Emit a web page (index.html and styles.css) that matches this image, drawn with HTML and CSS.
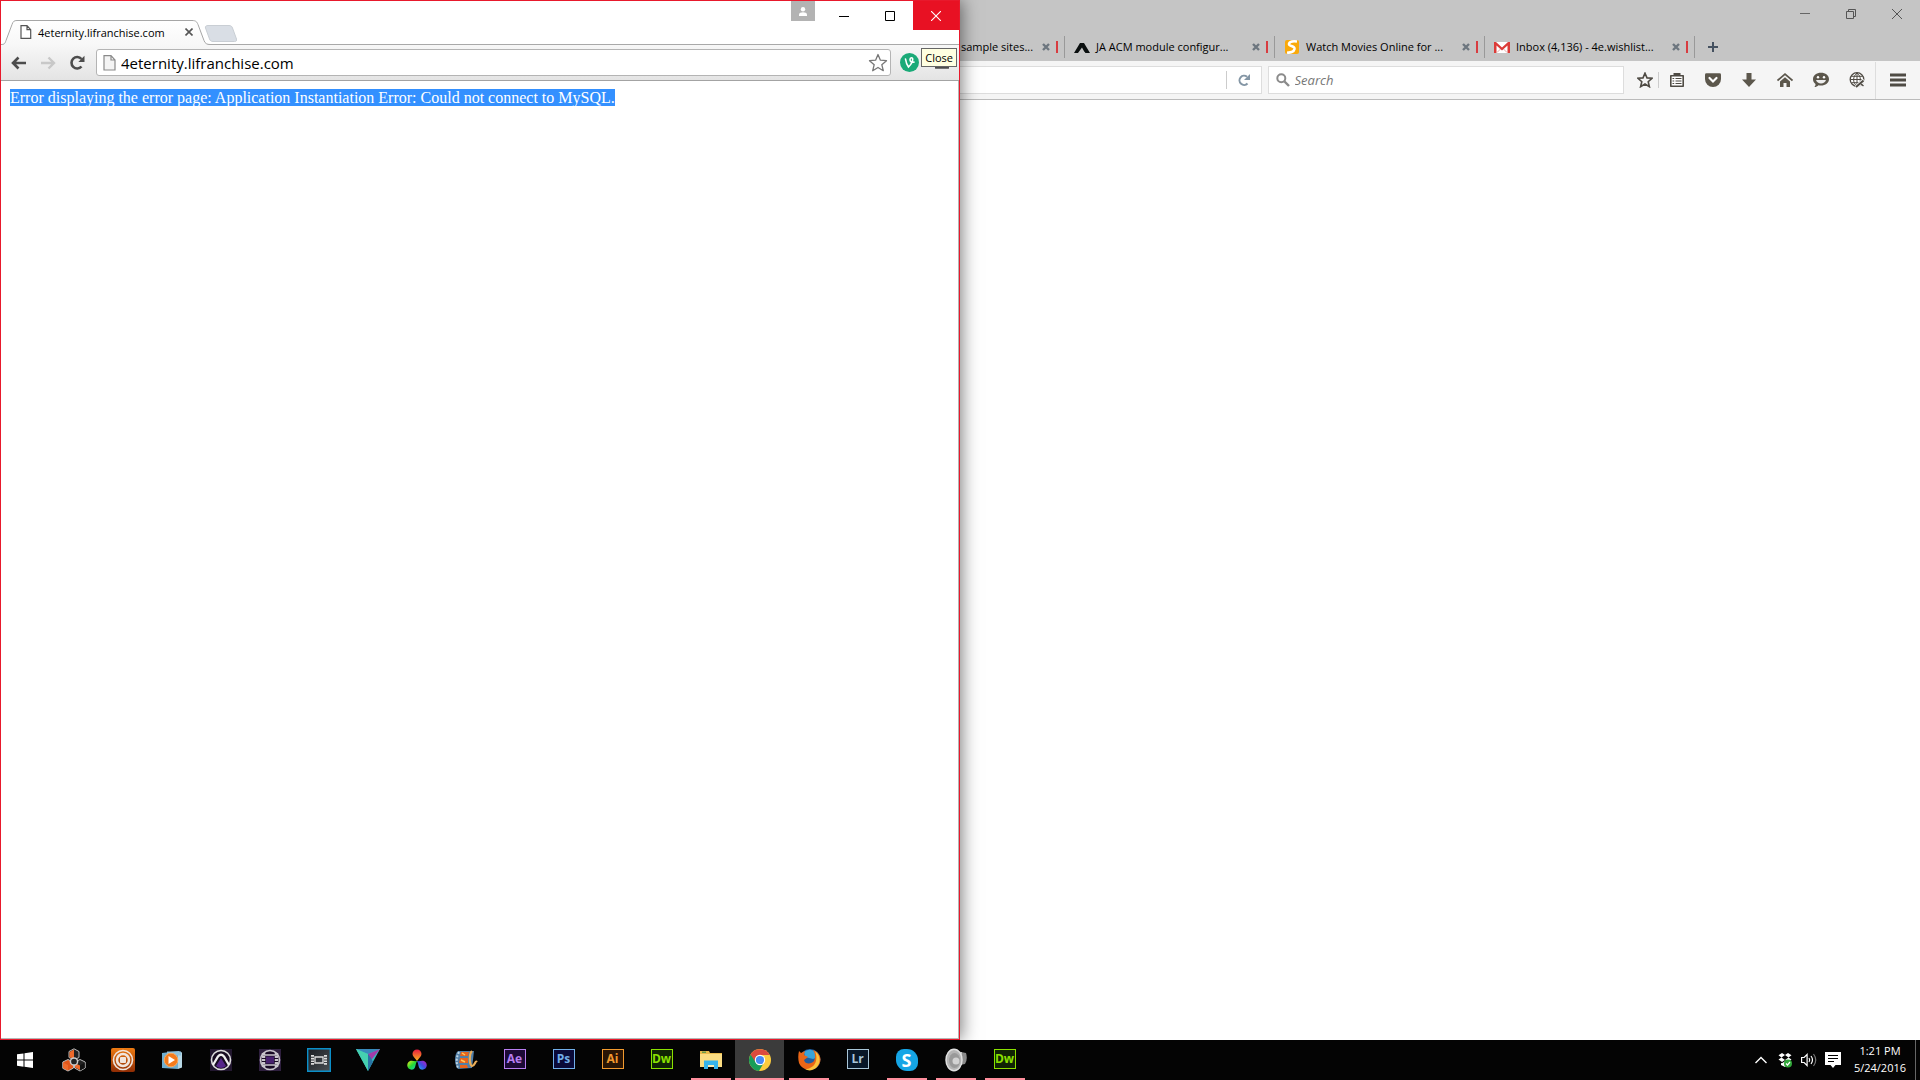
FILE: index.html
```html
<!DOCTYPE html>
<html lang="en">
<head>
    <meta charset="utf-8">
    <title>Desktop</title>
    <link rel="stylesheet" href="styles.css">
</head>
<body>
    <div class="windows">
        <!-- Chrome -->
        <section class="chrome">
            <header class="chrome-titlebar">
                <div class="chrome-tab">
                    <svg class="chrome-tab-shape" width="212" height="26" viewBox="0 0 212 26">
                        <defs>
                            <linearGradient id="tabFill" x1="0" y1="0" x2="0" y2="1"><stop offset="0" stop-color="#fff"/><stop offset="1" stop-color="#f7f7f7"/></linearGradient>
                        </defs>
                        <path d="M0 24.500C4 24.500 4 23 5 20.500L11 4.500C12 1.500 13 .500 16 .500H191C195 .500 196 2 197 4.500L203 20.500C204 23.500 206 24.500 209 24.500V26H0z" fill="url(#tabFill)"/>
                        <path d="M0 24.500C4 24.500 4 23 5 20.500L11 4.500C12 1.500 13 .500 16 .500H191C195 .500 196 2 197 4.500L203 20.500C204 23.500 206 24.500 209 24.500" fill="none" stroke="#a6a6a6"/>
                    </svg>
                    <svg class="chrome-page-icon" width="12" height="14" viewBox="0 0 12 14"><path d="M1 .700h6l3.700 4v8.600H1zM7 .700v4h3.700" fill="#fff" stroke="#555" stroke-width="1.200"/></svg>
                    <a class="chrome-tab-title" href="#">4eternity.lifranchise.com</a>
                    <button class="plain" aria-label="Close tab"><svg width="8" height="8" viewBox="0 0 8 8"><path d="M.500.500l7 7M7.500.500l-7 7" stroke="#555" stroke-width="1.600"/></svg></button>
                </div>
                <button class="plain new-tab" aria-label="New tab"><svg width="33" height="17" viewBox="0 0 33 17"><path d="M4 .500h21c2 0 3 1 3.500 2.500l4 11c.500 1.500 0 2.500-2 2.500H9c-2 0-3-1-3.500-2.500l-4-11C1 1.500 2 .500 4 .500z" fill="#d9dee5" stroke="#c9ced4"/></svg></button>
                <div class="chrome-controls">
                    <button class="plain profile" aria-label="Profile"><svg width="10" height="9" viewBox="0 0 10 9"><circle cx="5" cy="2.200" r="2.200" fill="#fff"/><path d="M1 9V7.500C1 6 3 5.300 5 5.300s4 .700 4 2.200V9z" fill="#fff"/></svg></button>
                    <button class="plain control" aria-label="Minimize"><svg width="10" height="10" viewBox="0 0 10 10"><path d="M0 5.500h10" stroke="#000"/></svg></button>
                    <button class="plain control" aria-label="Maximize"><svg width="10" height="10" viewBox="0 0 10 10"><path d="M.500.500h9v9h-9z" fill="none" stroke="#000"/></svg></button>
                    <button class="plain control control-close" aria-label="Close"><svg width="10" height="10" viewBox="0 0 10 10"><path d="M0 0l10 10M10 0L0 10" stroke="#fff" stroke-width="1.100"/></svg></button>
                </div>
            </header>
            <div class="chrome-toolbar">
                <button class="plain" aria-label="Back"><svg width="16" height="14" viewBox="0 0 16 14"><path d="M15 7H3M7.500 1.500L2 7l5.500 5.500" fill="none" stroke="#4d4d4d" stroke-width="2.600"/></svg></button>
                <button class="plain" aria-label="Forward"><svg width="16" height="14" viewBox="0 0 16 14"><path d="M1 7h12M8.500 1.500L14 7l-5.500 5.500" fill="none" stroke="#c8c8c8" stroke-width="2.400"/></svg></button>
                <button class="plain" aria-label="Reload"><svg width="16" height="16" viewBox="0 0 16 16"><path d="M12.500 11.500A5.700 5.700 0 1 1 12.500 4" fill="none" stroke="#4d4d4d" stroke-width="2.600"/><path d="M15.500.800V7H9.300z" fill="#4d4d4d"/></svg></button>
                <div class="omnibox">
                    <svg class="chrome-page-icon" width="13" height="16" viewBox="0 0 13 16"><path d="M1 .700h7l4 4.300v10H1zM8 .700V5h4" fill="#f4f4f4" stroke="#8a8a8a" stroke-width="1.200"/></svg>
                    <input class="omnibox-input" type="text" aria-label="Address" value="4eternity.lifranchise.com">
                    <button class="plain" aria-label="Bookmark"><svg width="20" height="19" viewBox="0 0 20 19"><path d="M10 1.500l2.400 5.700 6.100.500-4.700 4 1.500 6L10 14.500l-5.300 3.200 1.500-6-4.700-4 6.100-.500z" fill="#fff" stroke="#777" stroke-width="1.300" stroke-linejoin="round"/></svg></button>
                </div>
                <button class="plain" aria-label="Vine"><svg width="19" height="19" viewBox="0 0 19 19"><circle cx="9.500" cy="9.500" r="9.500" fill="#1aaa78"/><path d="M5.500 6c.500 3.500 1.500 6 3 8 2-2 4-4.500 4.200-7.500 0-2.500-2.700-2.300-2.700 0 0 2.300 1.500 3.300 4 2.600" fill="none" stroke="#fff" stroke-width="1.600" stroke-linecap="round"/></svg></button>
                <button class="plain chrome-menu" aria-label="Menu"><svg width="14" height="13" viewBox="0 0 14 13"><path d="M1 1.500h12M1 6.500h12M1 11.500h12" stroke="#4d4d4d" stroke-width="2.600" stroke-linecap="round"/></svg></button>
                <div class="tooltip" role="tooltip">Close</div>
            </div>
            <main class="chrome-page"><span class="selected">Error displaying the error page: Application Instantiation Error: Could not connect to MySQL.</span></main>
        </section>

        <!-- Firefox -->
        <section class="firefox">
            <header class="firefox-titlebar">
                <button class="plain" aria-label="Minimize"><svg width="10" height="10" viewBox="0 0 10 10"><path d="M0 4.500h10" stroke="#666"/></svg></button>
                <button class="plain" aria-label="Restore"><svg width="10" height="10" viewBox="0 0 10 10"><path d="M.500 2.500h7v7h-7zM2.500 2.500v-2h7v7h-2" fill="none" stroke="#555"/></svg></button>
                <button class="plain" aria-label="Close"><svg width="10" height="10" viewBox="0 0 10 10"><path d="M0 0l10 10M10 0L0 10" stroke="#555"/></svg></button>
            </header>
            <nav class="firefox-tabs">
                <div class="firefox-tab firefox-tab-cut">
                    <a class="firefox-tab-title" href="#">sample sites...</a>
                    <button class="plain" aria-label="Close tab"><svg width="8" height="8" viewBox="0 0 8 8"><path d="M1 1l6 6M7 1L1 7" stroke="#6d767f" stroke-width="2.400"/></svg></button>
                    <span class="tab-mark"></span>
                </div>
                <div class="firefox-tab">
                    <svg width="16" height="16" viewBox="0 0 16 16"><path d="M0 14L6 4h4l6 10h-5L8 8.500 4 14z" fill="#0a0f0f"/><path d="M4.500 14L8 10.800l3.500 3.200z" fill="#c5c5c5"/></svg>
                    <a class="firefox-tab-title" href="#">JA ACM module configur...</a>
                    <button class="plain" aria-label="Close tab"><svg width="8" height="8" viewBox="0 0 8 8"><path d="M1 1l6 6M7 1L1 7" stroke="#6d767f" stroke-width="2.400"/></svg></button>
                    <span class="tab-mark"></span>
                </div>
                <div class="firefox-tab">
                    <svg width="16" height="16" viewBox="0 0 16 16"><rect x="1" y="1" width="14" height="14" rx="2" fill="#f9a90a"/><path d="M13 2.500C9 2 5.500 2.500 5 5c-.400 2.500 6 1.500 5.500 5C10 13 6 14 3 13.500" fill="none" stroke="#fff" stroke-width="2.600"/></svg>
                    <a class="firefox-tab-title" href="#">Watch Movies Online for ...</a>
                    <button class="plain" aria-label="Close tab"><svg width="8" height="8" viewBox="0 0 8 8"><path d="M1 1l6 6M7 1L1 7" stroke="#6d767f" stroke-width="2.400"/></svg></button>
                    <span class="tab-mark"></span>
                </div>
                <div class="firefox-tab">
                    <svg width="16" height="16" viewBox="0 0 16 16"><path d="M0 3h16v11H0z" fill="#fff"/><path d="M0 14V3h2l6 5.500L14 3h2v11h-2.500V6.500L8 11.500 2.500 6.500V14z" fill="#dc3c39"/><path d="M3 13.500L6.500 10M13 13.500L9.500 10" stroke="#e5a9a6"/></svg>
                    <a class="firefox-tab-title" href="#">Inbox (4,136) - 4e.wishlist...</a>
                    <button class="plain" aria-label="Close tab"><svg width="8" height="8" viewBox="0 0 8 8"><path d="M1 1l6 6M7 1L1 7" stroke="#6d767f" stroke-width="2.400"/></svg></button>
                    <span class="tab-mark"></span>
                </div>
                <button class="plain firefox-new-tab" aria-label="New tab"><svg width="10" height="10" viewBox="0 0 10 10"><path d="M5 0v10M0 5h10" stroke="#455160" stroke-width="2"/></svg></button>
            </nav>
            <div class="firefox-toolbar">
                <div class="firefox-url">
                    <input type="text" aria-label="Firefox address">
                    <button class="plain" aria-label="Reload"><svg width="12" height="12" viewBox="0 0 12 12"><path d="M9.500 9.500A4.600 4.600 0 1 1 9 2.800" fill="none" stroke="#8496a5" stroke-width="2"/><path d="M12 0v6H6z" fill="#8496a5"/></svg></button>
                </div>
                <div class="firefox-search">
                    <svg width="14" height="14" viewBox="0 0 14 14"><circle cx="5.300" cy="5.300" r="4" fill="none" stroke="#8b8b8b" stroke-width="2"/><path d="M8.500 8.500l4.500 4.500" stroke="#8b8b8b" stroke-width="2.400"/></svg>
                    <input type="text" aria-label="Search" placeholder="Search">
                </div>
                <div class="firefox-tools">
                    <button class="plain tool-star" aria-label="Bookmark"><svg width="16" height="16" viewBox="0 0 16 16"><path d="M8 1.200l2 4.700 5 .400-3.800 3.400 1.200 5L8 12l-4.400 2.700 1.200-5L1 6.300l5-.400z" fill="none" stroke="#4f4b44" stroke-width="1.600"/></svg></button>
                    <button class="plain" aria-label="Bookmarks list"><svg width="16" height="16" viewBox="0 0 16 16"><path d="M1.800 3.800h12.400v10.400H1.800z" fill="#fff" stroke="#4f4b44" stroke-width="1.600" stroke-linejoin="round"/><path d="M4.500 3.500V1h7v2.500z" fill="#4f4b44"/><path d="M3.500 6.500h1.700M3.500 9h1.700M3.500 11.500h1.700M6.500 6.500h6M6.500 9h6M6.500 11.500h6" stroke="#4f4b44" stroke-width="1.100"/></svg></button>
                    <button class="plain" aria-label="Pocket"><svg width="16" height="16" viewBox="0 0 16 16"><path d="M0 2.500Q0 1.200 1.500 1.200h13Q16 1.200 16 2.500V7A8 8 0 0 1 0 7z" fill="#5c574c"/><path d="M4.500 6L8 9.500 11.500 6" fill="none" stroke="#fff" stroke-width="2.200" stroke-linecap="round"/></svg></button>
                    <button class="plain" aria-label="Downloads"><svg width="16" height="16" viewBox="0 0 16 16"><path d="M5.500 1h5v6.500H15L8 15 1 7.500h4.500z" fill="#5c574c"/></svg></button>
                    <button class="plain" aria-label="Home"><svg width="16" height="16" viewBox="0 0 16 16"><path d="M.500 8.500L8 2l7.500 6.500" fill="none" stroke="#5c574c" stroke-width="1.700"/><path d="M3 9.500l5-4.300 5 4.300V15H9.500v-4h-3v4H3z" fill="#5c574c"/></svg></button>
                    <button class="plain" aria-label="Chat"><svg width="16" height="16" viewBox="0 0 16 16"><path d="M8 .800c4.500 0 8 2.700 8 6.400s-3.500 6.300-8 6.300c-1 0-1.700 0-2.500-.300-1 1.200-2.400 1.800-4.200 1.900.800-.900 1.300-1.800 1.200-3.100C1 10.900 0 9.200 0 7.200 0 3.500 3.500.800 8 .800z" fill="#5c574c"/><circle cx="5" cy="5.200" r="1.200" fill="#fff"/><circle cx="11" cy="5.200" r="1.200" fill="#fff"/><path d="M3 8h10c-.700 2.200-2.600 3.400-5 3.400S3.700 10.200 3 8z" fill="#eee"/></svg></button>
                    <button class="plain" aria-label="Developer"><svg width="16" height="16" viewBox="0 0 16 16"><circle cx="8" cy="7.500" r="6.800" fill="#fff" stroke="#4f4b44" stroke-width="1.300"/><path d="M8 1v13M1.500 7.500h13M2.500 4.300h11M2.500 10.700h8M8 1C3.500 4.500 3.500 11 8 14M8 1c4.500 3.500 4.500 9.500 0 13" fill="none" stroke="#4f4b44"/><path d="M7 15.500L15 8" stroke="#f5f5f5" stroke-width="4"/><path d="M7 15l7.500-6.500" stroke="#4f4b44" stroke-width="2"/><path d="M12 12l2.500 2" stroke="#4f4b44" stroke-width="1.500"/></svg></button>
                    <button class="plain tool-menu" aria-label="Open menu"><svg width="16" height="14" viewBox="0 0 16 14"><path d="M0 2h16M0 7h16M0 12h16" stroke="#4f4b44" stroke-width="2.800"/></svg></button>
                </div>
            </div>
            <div class="firefox-page"></div>
        </section>
    </div>

    <footer class="taskbar">
        <div class="taskbar-apps">
            <button class="plain app" aria-label="Start"><svg width="16" height="16" viewBox="0 0 16 16"><path d="M0 2.300L6.500 1.400v6.200H0zM7.500 1.200L16 0v7.600H7.500zM0 8.500h6.500v6.200L0 13.800zM7.500 8.500H16V16l-8.500-1.200z" fill="#fff"/></svg></button>
            <button class="plain app" aria-label="Reason"><svg width="24" height="24" viewBox="0 0 24 24"><g stroke="#bbb"><path d="M12 .800l5 2.700v6L12 12 7 9.500v-6z" fill="#222"/><path d="M6 11.500l5.500 2.800v5.700L6 23 .800 20.300V14z" fill="#e2561a"/><path d="M18 11.500l5.200 2.500v6L18 23l-5.500-3v-5.700z" fill="#222"/></g><path d="M7.500 4l4.500-2.500V11L7.500 9.200zM13 15l5 2.500V22l-5-2.500zM1 14.500L6 17v5.500L1 20z" fill="#ee6a2b"/><path d="M18 17.500l4.700-3v5.500L18 22.500z" fill="#111"/><circle cx="12" cy="13.500" r="3.600" fill="#222" stroke="#ccc" stroke-width="1.500"/></svg></button>
            <button class="plain app" aria-label="Recorder"><svg width="24" height="24" viewBox="0 0 24 24"><defs><linearGradient id="orange" x1="0" y1="0" x2="0" y2="1"><stop offset="0" stop-color="#ee7b12"/><stop offset="1" stop-color="#8f2c04"/></linearGradient></defs><rect width="24" height="24" rx="2" fill="url(#orange)"/><circle cx="12" cy="12" r="9.500" fill="none" stroke="#f0e5de" stroke-width="1.600"/><circle cx="12" cy="12" r="6" fill="none" stroke="#f0e5de" stroke-width="2.500"/><rect x="9" y="9" width="6" height="6" rx="1" fill="#f0e5de"/></svg></button>
            <button class="plain app" aria-label="Media Player"><svg width="22" height="22" viewBox="0 0 22 22"><path d="M1 4l16-2v18L1 19z" fill="#70afd0"/><path d="M17 2l4 1.500v15L17 20z" fill="#b7d8e6"/><path d="M6 2.500h14v4H6z" fill="#8fc2dc"/><circle cx="10" cy="11" r="6.800" fill="#f47b1c" stroke="#fba95b"/><path d="M7.500 7v8l6.500-4z" fill="#fff"/></svg></button>
            <button class="plain app" aria-label="Pro Tools"><svg width="24" height="24" viewBox="0 0 24 24"><rect x="1" y="1" width="22" height="22" fill="#22172f"/><circle cx="12" cy="12" r="9.500" fill="#160b20" stroke="#ddd" stroke-width="1.600"/><path d="M4 17L9 8.500q3-3.500 6 0L20 17" fill="none" stroke="#eee" stroke-width="2.300"/><path d="M7 18l5-8 5 8q-5 4-10 0z" fill="#552589"/></svg></button>
            <button class="plain app" aria-label="Media Composer"><svg width="24" height="24" viewBox="0 0 24 24"><rect x="1" y="1" width="22" height="22" fill="#2f203f"/><circle cx="12" cy="12" r="9.500" fill="#180a24" stroke="#c9c5cc" stroke-width="1.600"/><path d="M4 7h16M4 17h16" stroke="#c9c5cc" stroke-width="1.500"/><path d="M5.500 5v14M18.500 5v14" stroke="#c9c5cc" stroke-width="3.500" stroke-dasharray="2 1"/><path d="M8 8.500h8v7H8z" fill="#47206e"/></svg></button>
            <button class="plain app" aria-label="Movie Studio"><svg width="24" height="24" viewBox="0 0 24 24"><defs><linearGradient id="steel" x1="0" y1="0" x2="1" y2="1"><stop offset="0" stop-color="#1a1d22"/><stop offset="1" stop-color="#4b5054"/></linearGradient></defs><path d="M.700.700h22.600v22.600H.700z" fill="url(#steel)" stroke="#0b8fc9" stroke-width="1.400"/><path d="M5.500 7v10M18.500 7v10" stroke="#ddd" stroke-width="3" stroke-dasharray="1.700 1"/><path d="M8 9h8v6H8z" fill="none" stroke="#ddd" stroke-width="1.300"/></svg></button>
            <button class="plain app" aria-label="Vegas"><svg width="24" height="22" viewBox="0 0 24 22"><path d="M0 0h24L12 22z" fill="#36b9bd"/><path d="M0 0h24l-12 5z" fill="#3889bb"/><path d="M0 0l12 5v17z" fill="#45d0b0"/><path d="M24 0L12 5v10z" fill="#a33caa"/><path d="M12 5v17l5-9-2-4z" fill="#2875a5"/></svg></button>
            <button class="plain app" aria-label="DaVinci Resolve"><svg width="24" height="24" viewBox="0 0 24 24"><defs><linearGradient id="red" x1="0" y1="0" x2="0" y2="1"><stop offset="0" stop-color="#e91b40"/><stop offset="1" stop-color="#f8b81c"/></linearGradient><linearGradient id="green" x1="0" y1="0" x2="1" y2="1"><stop offset="0" stop-color="#f4ed1c"/><stop offset=".5" stop-color="#25d835"/><stop offset="1" stop-color="#18cbd1"/></linearGradient><linearGradient id="blue" x1="0" y1="1" x2="1" y2="0"><stop offset="0" stop-color="#24bfeb"/><stop offset=".5" stop-color="#3d4de5"/><stop offset="1" stop-color="#c01bbd"/></linearGradient></defs><path d="M12 13C10 10 7.500 8.500 7.500 6a4.500 4.500 0 0 1 9 0C16.500 8.500 14 10 12 13z" fill="url(#red)"/><path d="M12 13c-2 3.500-1 6.500-3.500 8.300a4.500 4.500 0 1 1-3.500-8.300c2.500-.700 4 .500 7 0z" fill="url(#green)"/><path d="M12 13c2 3.500 1 6.500 3.500 8.300a4.500 4.500 0 1 0 3.500-8.300c-2.500-.700-4 .500-7 0z" fill="url(#blue)"/></svg></button>
            <button class="plain app" aria-label="Video Editor"><svg width="24" height="22" viewBox="0 0 24 22"><path d="M4 2h16L18 19l-14 1C0 16 0 5 4 2z" fill="#527fa8"/><path d="M5 3Q1 11 4 19" fill="none" stroke="#bed5e1" stroke-width="2" stroke-dasharray="2 1.500"/><path d="M7 3h8l-1 4H6zM6 9h8v5H5zM6 16h7l1 3H6z" fill="#e8641c"/><path d="M8 4l3 2M7 11l4 2" stroke="#ffc75b" stroke-width="1.500"/><path d="M18 2c-3 3-3 13 0 15 3 .500 3-6 5-4" fill="none" stroke="#e9ad58" stroke-width="2.200"/></svg></button>
            <button class="plain app" aria-label="After Effects"><span class="adobe adobe-ae">Ae</span></button>
            <button class="plain app" aria-label="Photoshop"><span class="adobe adobe-ps">Ps</span></button>
            <button class="plain app" aria-label="Illustrator"><span class="adobe adobe-ai">Ai</span></button>
            <button class="plain app" aria-label="Dreamweaver"><span class="adobe adobe-dw">Dw</span></button>
            <button class="plain app running" aria-label="File Explorer"><svg width="22" height="20" viewBox="0 0 22 20"><path d="M0 1h9l1 2h12v14H0z" fill="#e9b94c"/><path d="M0 4h22v13H0z" fill="#fbdc82"/><path d="M2 1.500h4v1.500H2z" fill="#6a9b48"/><path d="M4 10.500h14V19h-4v-4H8v4H4z" fill="#36b3ec"/><path d="M8 15h6v2H8z" fill="#fceab1"/></svg></button>
            <button class="plain app running active" aria-label="Chrome"><svg width="22" height="22" viewBox="0 0 22 22"><circle cx="11" cy="11" r="11" fill="#fccb3d"/><path d="M11 11L1.500 5.500A11 11 0 0 0 10 22l5-8.500z" fill="#189d59"/><path d="M1.500 5.500A11 11 0 0 1 20.600 6H11a5 5 0 0 0-4.500 7z" fill="#dc4a3d"/><circle cx="11" cy="11" r="5.200" fill="#fff"/><circle cx="11" cy="11" r="4.100" fill="#4789f4"/></svg></button>
            <button class="plain app running" aria-label="Firefox"><svg width="24" height="24" viewBox="0 0 24 24"><circle cx="13" cy="11.500" r="10.500" fill="#1f5c9f"/><path d="M7 4q7-5 12 1 2 5-3 6L8 9z" fill="#39a3d8"/><path d="M2 3l2 2 4-2-1 4 4 2-4 3c1 5 8 4 10 1 2-4 1-8-1-11 8 3 10 11 4 17-6 5-15 3-18-4C1 11 1 7 2 3z" fill="#e96616"/><path d="M18 3c6 5 6 12 1 17-4 3-8 3-11 1 9 0 14-8 10-18z" fill="#fbc33b"/></svg></button>
            <button class="plain app" aria-label="Lightroom"><span class="adobe adobe-lr">Lr</span></button>
            <button class="plain app running" aria-label="Skype"><span class="skype">S</span></button>
            <button class="plain app running" aria-label="Sound"><svg width="22" height="24" viewBox="0 0 22 24"><path d="M9 1l7 3 5 1q2 6-1 11l-5 1-6 5z" fill="#8b8b8b"/><path d="M16 4v13" stroke="#c5c5c5" stroke-width="2"/><ellipse cx="9" cy="12" rx="8" ry="10.800" fill="#b4b4b4" stroke="#e0e0e0" stroke-width="1.500"/><ellipse cx="9.500" cy="12.500" rx="5.500" ry="7.500" fill="#999"/><circle cx="11" cy="13" r="3.500" fill="#d2d2d2"/></svg></button>
            <button class="plain app running" aria-label="Dreamweaver site"><span class="adobe adobe-dw">Dw</span></button>
        </div>
        <div class="tray">
            <button class="plain tray-icon" aria-label="Show hidden icons"><svg width="12" height="8" viewBox="0 0 12 8"><path d="M.500 7L6 1.500 11.500 7" fill="none" stroke="#fff" stroke-width="1.400"/></svg></button>
            <button class="plain tray-icon" aria-label="Dropbox"><svg width="14" height="15" viewBox="0 0 14 15"><path d="M4 0l3 2-3.500 2.500L.500 2.200zM10 0l3.500 2.200-3 2.300L7 2zM.500 6.500l3-2L7 7 4 9zM10.500 4.500l3 2L10 9 7 7zM3 10l1 .300 3-2 3 2V12l-3 2-4-2z" fill="#fff"/><circle cx="10" cy="10.500" r="4" fill="#32a83a"/><path d="M8 10.500l1.500 1.500L12 9" fill="none" stroke="#fff" stroke-width="1.200"/></svg></button>
            <button class="plain tray-icon" aria-label="Volume"><svg width="16" height="14" viewBox="0 0 16 14"><path d="M.600 4.500h2.500l3-3v11l-3-3H.600z" fill="none" stroke="#fff" stroke-width="1.200"/><path d="M8 5q1.500 2 0 4M10 3q3 4 0 8" fill="none" stroke="#fff" stroke-width="1.200"/><path d="M12.500 1q4.500 6 0 12" fill="none" stroke="#777" stroke-width="1.200"/></svg></button>
            <button class="plain tray-icon" aria-label="Notifications"><svg width="16" height="16" viewBox="0 0 16 16"><path d="M0 0h16v13H10.500L8 16l-2.500-3H0z" fill="#fff"/><path d="M3 3.500h10M3 6.500h10M3 9.500h6" stroke="#000" stroke-width="1.200"/></svg></button>
            <div class="clock">
                <div>1:21 PM</div>
                <div>5/24/2016</div>
            </div>
            <button class="plain show-desktop" aria-label="Show desktop"></button>
        </div>
    </footer>
</body>
</html>
```

FILE: styles.css
```css
* {
    box-sizing: border-box;
}
body {
    margin: 0;
    min-height: 100vh;
    display: flex;
    flex-direction: column;
    font-family: "Open Sans", "Noto Sans", sans-serif;
    font-size: 11px;
    color: #000;
    background-color: #fff;
}
a {
    color: inherit;
    text-decoration: none;
}
svg {
    display: block;
    flex: none;
}
input {
    min-width: 0;
    flex: 1;
    padding: 0;
    border: none;
    outline: none;
    background: none;
    font-family: inherit;
    color: #000;
}
.plain {
    display: flex;
    align-items: center;
    justify-content: center;
    flex: none;
    padding: 0;
    border: none;
    background: none;
    font-family: inherit;
}
.windows {
    flex: 1;
    display: grid;
    grid-template-columns: 1fr 1fr;
}

/* Chrome window */
.chrome {
    position: relative;
    z-index: 1;
    display: flex;
    flex-direction: column;
    border: 1px solid #e8192c;
    background-color: #fff;
    box-shadow: 2px 0 16px rgba(0, 0, 0, 0.5);
}
.chrome-titlebar {
    display: flex;
    align-items: flex-end;
    height: 43px;
}
.chrome-tab {
    position: relative;
    z-index: 1;
    display: flex;
    align-items: center;
    width: 203px;
    height: 24px;
    padding: 0 11px 0 19px;
}
.chrome-tab-shape {
    position: absolute;
    left: 0;
    top: 0;
}
.chrome-page-icon,
.chrome-tab-title,
.chrome-tab .plain {
    position: relative;
}
.chrome-tab-title {
    flex: 1;
    margin-left: 6px;
    white-space: nowrap;
}
.new-tab {
    margin-bottom: 2px;
}
.chrome-controls {
    display: flex;
    align-self: flex-start;
    margin-left: auto;
}
.profile {
    width: 24px;
    height: 20px;
    margin-right: 6px;
    background-color: #b3b3b3;
}
.control {
    width: 46px;
    height: 29px;
}
.control-close {
    background-color: #e81123;
}
.chrome-toolbar {
    position: relative;
    display: flex;
    align-items: center;
    gap: 13px;
    height: 37px;
    padding: 0 10px;
    border-top: 1px solid #a9a9a9;
    border-bottom: 1px solid #a3a3a3;
    background: linear-gradient(#f7f7f7, #e4e4e4);
}
.omnibox {
    flex: 1;
    display: flex;
    align-items: center;
    gap: 5px;
    height: 27px;
    margin: 0 -4px 0 -2px;
    padding: 0 2px 0 6px;
    border: 1px solid #b4b4b4;
    border-radius: 3px;
    background-color: #fff;
}
.omnibox-input {
    font-size: 15px;
}
.chrome-menu {
    margin-left: 3px;
}
.tooltip {
    position: absolute;
    right: 2px;
    top: 3px;
    padding: 0 3px;
    border: 1px solid #666;
    background-color: #ffffe1;
    font-size: 11px;
    line-height: 17px;
}
.chrome-page {
    flex: 1;
    padding: 8px 8px 8px 9px;
    border-right: 1px solid #b5b5b5;
    border-bottom: 1px solid #b5b5b5;
    font-family: "Liberation Serif", "Times New Roman", serif;
    font-size: 16px;
    line-height: 18px;
}
.selected {
    background-color: #3390ff;
    color: #fff;
}

/* Firefox window */
.firefox {
    display: flex;
    flex-direction: column;
    background-color: #c5c5c5;
}
.firefox-titlebar {
    display: flex;
    justify-content: flex-end;
    height: 33px;
    padding-bottom: 5px;
}
.firefox-titlebar .plain {
    width: 46px;
}
.firefox-tabs {
    display: flex;
    align-items: center;
    height: 28px;
}
.firefox-tab {
    display: flex;
    align-items: center;
    width: 210px;
    height: 22px;
    padding: 0 6px 0 9px;
    border-right: 1px solid #999;
}
.firefox-tab-cut {
    width: 105px;
    padding-left: 1px;
}
.firefox-tab-title {
    flex: 1;
    margin-left: 6px;
    padding-bottom: 2px;
    white-space: nowrap;
}
.firefox-tab-cut .firefox-tab-title {
    margin-left: 0;
}
.tab-mark {
    width: 2px;
    height: 12px;
    margin-left: 6px;
    background-color: #d83c40;
}
.firefox-new-tab {
    width: 36px;
}
.firefox-toolbar {
    display: flex;
    align-items: center;
    height: 39px;
    border-bottom: 1px solid #bbb;
    background-color: #f5f5f5;
}
.firefox-url,
.firefox-search {
    display: flex;
    align-items: center;
    height: 28px;
    border: 1px solid #ddd;
    background-color: #fff;
}
.firefox-url {
    flex: 301;
    border-left: none;
}
.firefox-url .plain {
    width: 35px;
    height: 18px;
    border-left: 1px solid #ccc;
}
.firefox-search {
    flex: 341;
    gap: 5px;
    margin-left: 6px;
    padding: 0 7px;
}
.firefox-search input {
    font-size: 13px;
}
.firefox-search input::placeholder {
    color: #777;
    font-style: italic;
    opacity: 1;
}
.firefox-tools {
    display: flex;
    align-items: center;
    margin-left: 7px;
}
.firefox-tools .plain {
    width: 36px;
}
.firefox-tools .tool-star {
    width: 28px;
    height: 16px;
    border-right: 1px solid #ccc;
}
.firefox-tools .tool-menu {
    width: 45px;
    height: 37px;
    border-left: 1px solid #ddd;
}
.firefox-page {
    flex: 1;
    background-color: #fff;
}

/* Taskbar */
.taskbar {
    position: relative;
    z-index: 2;
    display: flex;
    justify-content: space-between;
    height: 40px;
    background-color: #040404;
    color: #fff;
}
.taskbar-apps,
.tray {
    display: flex;
    align-items: center;
}
.app {
    width: 49px;
    height: 40px;
}
.running {
    background: linear-gradient(#ff8e9d, #ff8e9d) bottom / 40px 2px no-repeat;
}
.active {
    background-color: #3b3b3b;
    background-size: 100% 2px;
}
.adobe {
    width: 22px;
    height: 20px;
    margin-bottom: 2px;
    border: 1px solid;
    font-size: 12px;
    font-weight: 700;
    line-height: 18px;
    text-align: center;
}
.adobe-ae {
    color: #b77df0;
    background-color: #1c0a36;
}
.adobe-ps {
    color: #71aee9;
    background-color: #0a0a38;
}
.adobe-ai {
    color: #f29a2e;
    background-color: #2a1504;
}
.adobe-dw {
    color: #8ae000;
    background-color: #102304;
}
.adobe-lr {
    color: #a9c6d8;
    background-color: #081728;
}
.skype {
    width: 22px;
    height: 22px;
    border-radius: 8px 11px 8px 11px;
    background-color: #15a5e6;
    color: #fff;
    font-size: 18px;
    font-weight: 700;
    line-height: 22px;
    text-align: center;
}
.tray-icon {
    width: 24px;
    height: 40px;
}
.clock {
    width: 70px;
    padding-bottom: 2px;
    font-size: 11px;
    line-height: 17px;
    text-align: center;
}
.show-desktop {
    width: 5px;
    height: 40px;
    border-left: 1px solid #666;
}
```
